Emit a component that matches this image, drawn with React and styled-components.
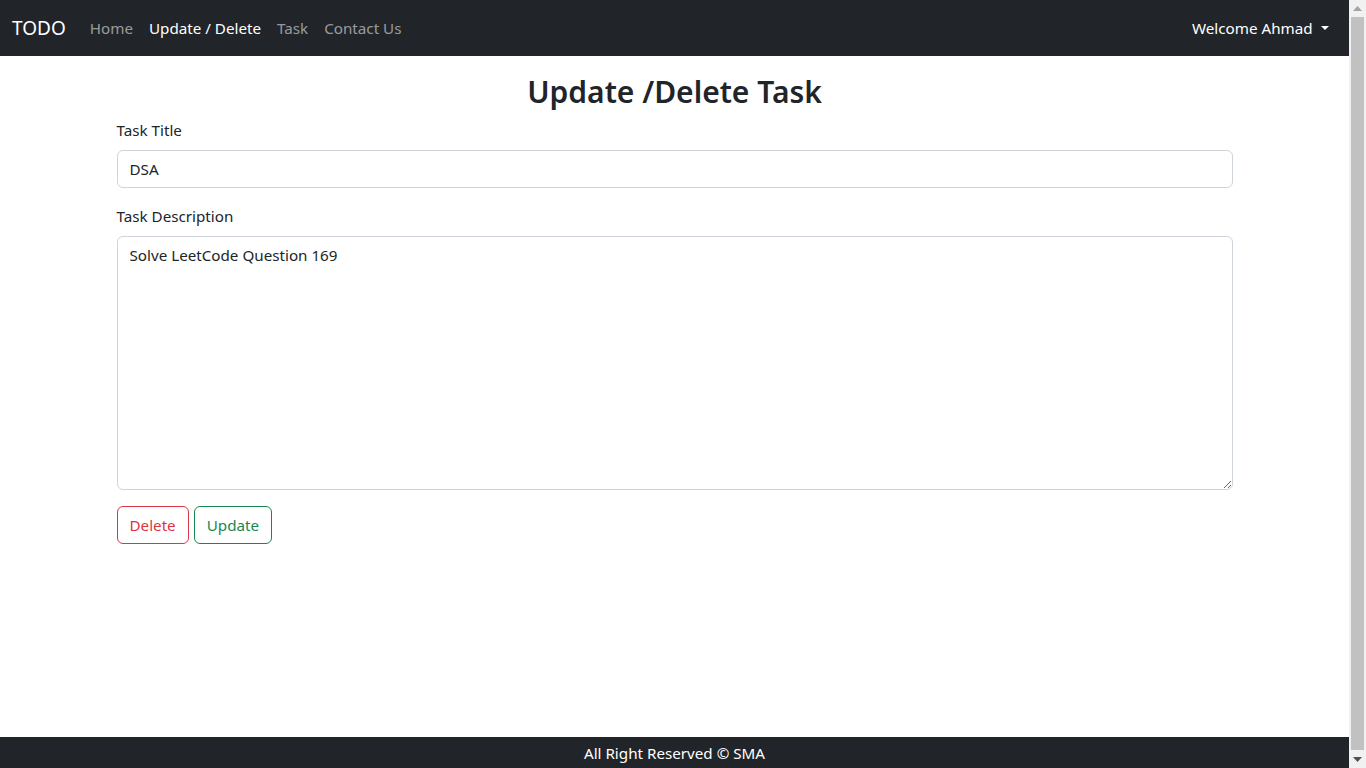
import styled, { createGlobalStyle } from "styled-components";

const GlobalStyle = createGlobalStyle`
    * {
        box-sizing: border-box;
    }

    html, body {
        margin: 0;
        padding: 0;
        overflow: hidden;
    }

    body {
        font-family: "Noto Sans", "Open Sans", sans-serif;
        font-size: 15.2px;
        line-height: 24px;
        color: #212529;
        background: #fff;
    }
`

const Viewport = styled.div`
    display: flex;
    height: 100vh;
`

const Page = styled.div`
    flex: 1;
    min-width: 0;
    display: flex;
    flex-direction: column;
`

const Scrollbar = styled.div`
    width: 17px;
    background: #f1f1f1;
    display: flex;
    flex-direction: column;
`

const ScrollArrow = styled.div`
    height: 17px;
    display: flex;
    align-items: center;
    justify-content: center;
`

const ScrollThumb = styled.div`
    flex: 1;
    margin: 0 2px 1px;
    background: #c1c1c1;
`

const Navbar = styled.nav`
    height: 56px;
    flex-shrink: 0;
    background: #212529;
    padding: 0 12px;
    display: flex;
    align-items: center;
    justify-content: space-between;
`

const Brand = styled.a`
    font-size: 19px;
    color: #fff;
    margin-right: 16px;
    text-decoration: none;
    line-height: 30px;
`

const NavLeft = styled.div`
    display: flex;
    align-items: center;
`

const NavList = styled.div`
    display: flex;
`

const NavLink = styled.a`
    padding: 8px;
    color: ${(p) => (p.$active ? "#fff" : "rgba(255, 255, 255, 0.55)")};
    text-decoration: none;
    cursor: pointer;
`

const UserToggle = styled.a`
    padding: 8px;
    color: #fff;
    text-decoration: none;
    cursor: pointer;

    &::after {
        content: "";
        display: inline-block;
        margin-left: 0.55em;
        vertical-align: 0.255em;
        border-top: 0.3em solid;
        border-right: 0.3em solid transparent;
        border-left: 0.3em solid transparent;
        border-bottom: 0;
    }
`

const Container = styled.main`
    width: 100%;
    max-width: 1140px;
    margin: 0 auto;
    padding: 0 12px;
`

const Title = styled.h2`
    text-align: center;
    font-size: 30px;
    font-weight: 600;
    line-height: 38.4px;
    margin: 17px 0 7px;
`

const Field = styled.div`
    margin-bottom: 16px;
`

const Label = styled.label`
    display: block;
    margin-bottom: 8px;
`

const inputBase = `
    display: block;
    width: 100%;
    padding: 6px 12px;
    font: inherit;
    line-height: 24px;
    color: #212529;
    background: #fff;
    border: 1px solid #ced4da;
    border-radius: 6px;
    outline: none;
`

const Input = styled.input`
    ${inputBase}
    height: 38px;
`

const TextArea = styled.textarea`
    ${inputBase}
    height: 254px;
    resize: vertical;
`

const Actions = styled.div`
    display: flex;
    gap: 5px;
`

const Button = styled.button`
    padding: 6px 12px;
    font: inherit;
    line-height: 24px;
    background: transparent;
    color: ${(p) => p.$color};
    border: 1px solid ${(p) => p.$color};
    border-radius: 6px;
    cursor: pointer;
`

const Footer = styled.footer`
    margin-top: auto;
    height: 31px;
    flex-shrink: 0;
    background: #212529;
    color: #fff;
    text-align: center;
    padding-top: 4px;
`

const Triangle = ({ up, color }) => (
    <svg width="9" height="5" viewBox="0 0 9 5">
        <path d={up ? "M0 5 L4.5 0 L9 5 Z" : "M0 0 L4.5 5 L9 0 Z"} fill={color} />
    </svg>
)

const App = () => {
    return (
        <Viewport>
            <GlobalStyle />
            <Page>
                <Navbar>
                    <NavLeft>
                        <Brand>TODO</Brand>
                        <NavList>
                            <NavLink>Home</NavLink>
                            <NavLink $active>Update / Delete</NavLink>
                            <NavLink>Task</NavLink>
                            <NavLink>Contact Us</NavLink>
                        </NavList>
                    </NavLeft>
                    <UserToggle>Welcome Ahmad</UserToggle>
                </Navbar>

                <Container>
                    <Title>Update /Delete Task</Title>
                    <Field>
                        <Label htmlFor="title">Task Title</Label>
                        <Input id="title" defaultValue="DSA" />
                    </Field>
                    <Field>
                        <Label htmlFor="desc">Task Description</Label>
                        <TextArea id="desc" rows={10} defaultValue="Solve LeetCode Question 169" />
                    </Field>
                    <Actions>
                        <Button $color="#dc3545">Delete</Button>
                        <Button $color="#198754">Update</Button>
                    </Actions>
                </Container>

                <Footer>All Right Reserved © SMA</Footer>
            </Page>

            <Scrollbar>
                <ScrollArrow>
                    <Triangle up color="#a3a3a3" />
                </ScrollArrow>
                <ScrollThumb />
                <ScrollArrow>
                    <Triangle color="#505050" />
                </ScrollArrow>
            </Scrollbar>
        </Viewport>
    )
}

export default App
